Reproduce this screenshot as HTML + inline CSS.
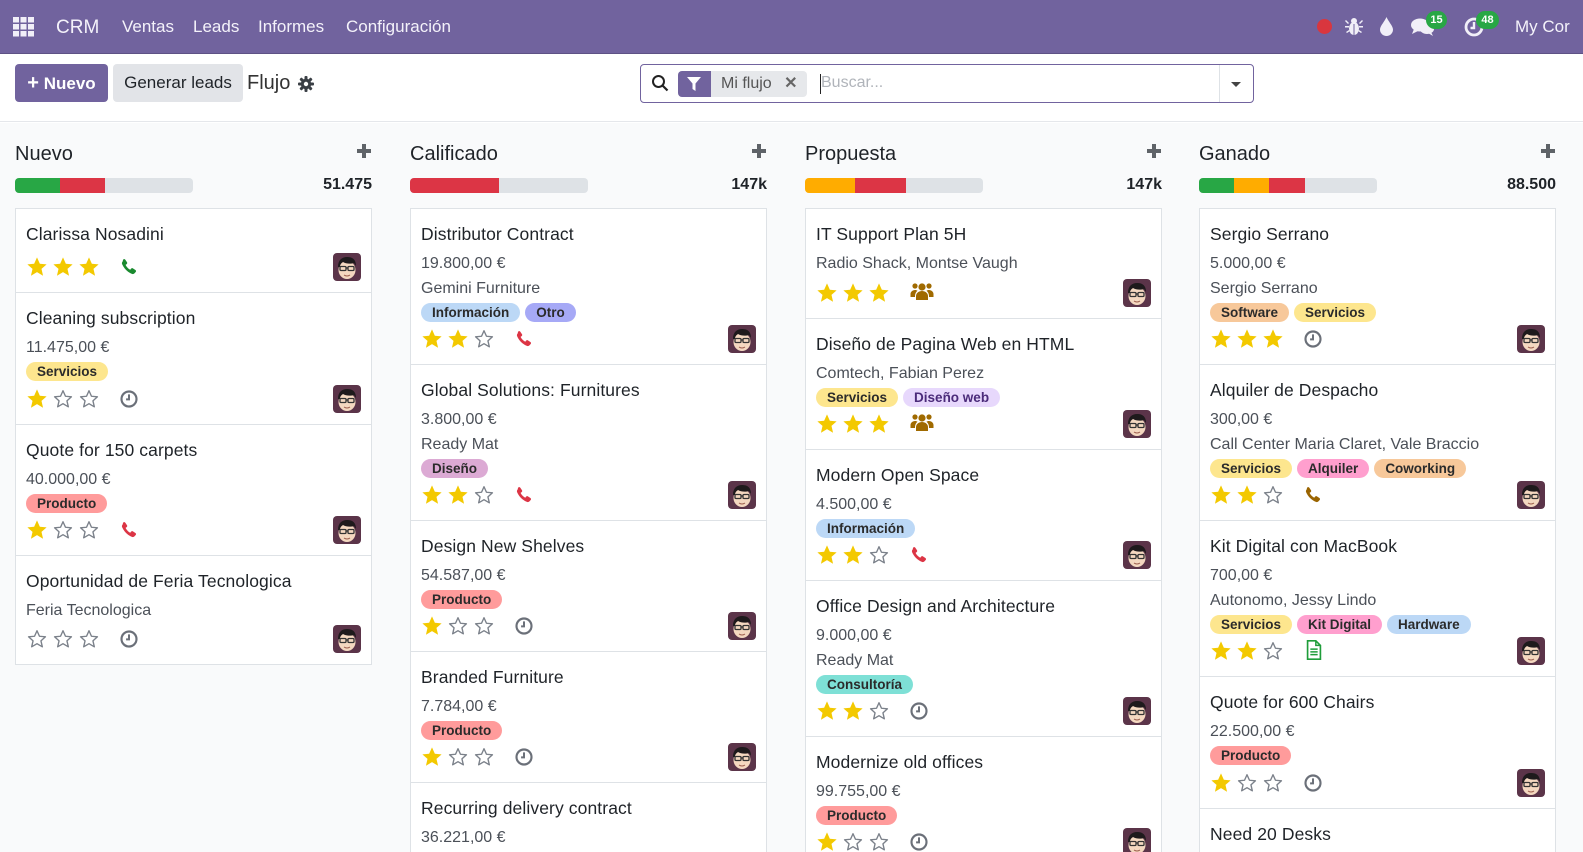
<!DOCTYPE html>
<html style="width:1583px;height:852px;overflow:hidden"><head><meta charset="utf-8">
<style>
*{box-sizing:border-box;margin:0;padding:0}
html,body{width:1583px;height:852px;overflow:hidden}
body{font-family:"Liberation Sans",sans-serif;background:#fff;position:relative;color:#1f2328}
.nav{position:absolute;left:0;top:0;width:1583px;height:54px;background:#71639e;border-bottom:1px solid #5e5285;color:#fff}
.nav span{position:absolute;top:17px;font-size:17px;color:#f4f2fa}
.ctrl{position:absolute;top:54px;left:0;width:1583px;height:68px;background:#fff;border-bottom:1px solid #e5e7eb}
.btnp{position:absolute;left:15px;top:64px;width:93px;height:38px;background:#71639e;border-radius:4px;color:#fff;font-size:17px;line-height:38px;text-align:center}
.btns{position:absolute;left:113px;top:64px;width:130px;height:38px;background:#e2e4e8;border-radius:4px;color:#1f2328;font-size:17px;line-height:38px;text-align:center}
.board{position:absolute;top:123px;left:0;width:1583px;height:729px;background:#f9fafb}
.col{position:absolute;top:123px;width:357px}
.ch{position:absolute;top:20px;left:0;font-size:20px;color:#1f2328}
.plus{position:absolute;right:0;top:20px;width:16px;height:16px}
.bar{position:absolute;top:55px;left:0;width:178px;height:15px;background:#dee2e6;border-radius:4px;overflow:hidden;display:flex}
.bar i{display:block;height:15px}
.tot{position:absolute;right:0;top:53px;font-size:16px;font-weight:bold;color:#1f2328}
.card{position:absolute;left:0;width:357px;background:#fff;border:1px solid #dee2e6;padding:12px 10px 0 10px}
.t{font-size:17.5px;line-height:26px;height:26px;color:#1f2328;white-space:nowrap;letter-spacing:.1px}
.s{font-size:16px;line-height:25px;height:25px;color:#4b5058;white-space:nowrap}
.s.f{margin-top:3.5px}
.tags{margin-top:2px;height:19px;display:flex;gap:5px}
.tag{height:19px;line-height:19px;border-radius:10px;padding:0 11px;font-size:13.5px;font-weight:bold;color:#2b2b2b}
.y{background:#fde68e}.r{background:#ff9b9b}.b{background:#bcd8f6}.v{background:#a6a9f6}.p{background:#dcaad4}.o{background:#f7c89a}.k{background:#ff9fce}.l{background:#e7d8fc;color:#4b2b7a}.g{background:#7ee0d6}
.ft{position:absolute;left:10px;right:10px;bottom:10px;height:30px}
.ft svg.st{position:absolute;top:4px;width:22px;height:22px}
.ic{position:absolute;left:93px;top:5px;width:20px;height:20px}
.av{position:absolute;right:0;top:1px;width:28px;height:28px}
</style></head><body>
<svg width="0" height="0" style="position:absolute">
<defs>
<symbol id="sf" viewBox="0 0 24 24"><path d="M12 1.5l3.1 6.9 7.4.7-5.6 5 1.7 7.4L12 17.6l-6.6 3.9 1.7-7.4-5.6-5 7.4-.7z" fill="#f3c900"/></symbol>
<symbol id="se" viewBox="0 0 24 24"><path d="M12 3l2.7 6 6.5.6-4.9 4.4 1.5 6.5L12 17.1l-5.8 3.4 1.5-6.5-4.9-4.4 6.5-.6z" fill="none" stroke="#7b818a" stroke-width="1.5" stroke-linejoin="round"/></symbol>
<symbol id="ph" viewBox="0 0 24 24"><path d="M5 3c1-.8 2-.6 2.6.3l2 3c.5.8.3 1.6-.4 2.2l-1.3 1c1.2 2.5 3.1 4.5 5.6 5.8l1-1.3c.6-.7 1.5-.9 2.2-.4l3 2c.9.6 1 1.7.2 2.6l-1.4 1.5c-.8.8-2 1-3 .6C9.8 17.7 6.3 14.2 3.7 8.5c-.4-1-.2-2.2.6-3z" fill="currentColor"/></symbol>
<symbol id="ck" viewBox="0 0 24 24"><circle cx="12" cy="12" r="9" fill="none" stroke="#6b7079" stroke-width="2.6"/><path d="M12 6.5V12.5H8.5" fill="none" stroke="#6b7079" stroke-width="2.4"/></symbol>
<symbol id="pp" viewBox="0 0 24 24"><g fill="#a06a00"><circle cx="12" cy="7" r="3.6"/><circle cx="5" cy="6" r="2.6"/><circle cx="19" cy="6" r="2.6"/><path d="M6 20v-4c0-3 3-5 6-5s6 2 6 5v4z"/><path d="M0.5 17v-3c0-2 2-4 4.5-4 1 0 2 .3 2.5.8C6 12 5 14 5 16v1z"/><path d="M23.5 17v-3c0-2-2-4-4.5-4-1 0-2 .3-2.5.8C18 12 19 14 19 16v1z"/></g></symbol>
<symbol id="dc" viewBox="0 0 24 24"><path d="M5 2h9l5 5v15H5z" fill="none" stroke="#1f9d3a" stroke-width="1.8"/><path d="M14 2v5h5M8 11h8M8 14h8M8 17h8" fill="none" stroke="#1f9d3a" stroke-width="1.6"/></symbol>
<symbol id="avt" viewBox="0 0 28 28"><rect width="28" height="28" rx="4" fill="#5b3449"/><ellipse cx="14" cy="17" rx="8.5" ry="9" fill="#f4d8c0"/><path d="M5 14c0-7 4-10 9-10s9 2 9 9l-2-3c-3 1-8 1-11-1-2 1-3 3-3 5z" fill="#1e1a1c"/><g fill="none" stroke="#333" stroke-width="1.3"><rect x="7" y="13.5" width="6" height="4" rx="1"/><rect x="15" y="13.5" width="6" height="4" rx="1"/><path d="M13 15h2"/></g><path d="M11 22q3 2 6 0" stroke="#9a5b4a" stroke-width="1" fill="none"/></symbol>
<symbol id="pl" viewBox="0 0 16 16"><path d="M6 1h4v5h5v4h-5v5H6v-5H1V6h5z" fill="#5f6368"/></symbol>
</defs></svg>

<div class="nav">
<svg style="position:absolute;left:13px;top:17px" width="21" height="20" viewBox="0 0 21 20"><g fill="#f1eff8"><rect x="0" y="0" width="6" height="5.5"/><rect x="7.5" y="0" width="6" height="5.5"/><rect x="15" y="0" width="6" height="5.5"/><rect x="0" y="7" width="6" height="5.5"/><rect x="7.5" y="7" width="6" height="5.5"/><rect x="15" y="7" width="6" height="5.5"/><rect x="0" y="14" width="6" height="5.5"/><rect x="7.5" y="14" width="6" height="5.5"/><rect x="15" y="14" width="6" height="5.5"/></g></svg>
<span style="left:56px;font-size:19px;top:17px">CRM</span>
<span style="left:122px">Ventas</span>
<span style="left:193px">Leads</span>
<span style="left:258px">Informes</span>
<span style="left:346px">Configuración</span>
<div style="position:absolute;left:1317px;top:19px;width:15px;height:15px;border-radius:50%;background:#d9363e"></div>
<svg style="position:absolute;left:1345px;top:17px" width="18" height="19" viewBox="0 0 18 19"><g fill="#f1eff8"><ellipse cx="9" cy="11.5" rx="5" ry="6.5"/><circle cx="9" cy="4" r="3"/><path d="M0 9h4v1.5H0zM14 9h4v1.5h-4zM1 15l3-2 1 1-3 2zM17 15l-3-2-1 1 3 2zM1 3l3 3-1 1-3-3zM17 3l-3 3 1 1 3-3z"/></g><path d="M9 7v11" stroke="#71639e" stroke-width="1"/></svg>
<svg style="position:absolute;left:1380px;top:17px" width="13" height="19" viewBox="0 0 13 19"><path d="M6.5 0C5 4 0 9 0 12.5a6.5 6.5 0 0 0 13 0C13 9 8 4 6.5 0z" fill="#f1eff8"/></svg>
<svg style="position:absolute;left:1411px;top:17px" width="24" height="20" viewBox="0 0 24 20"><g fill="#f1eff8"><ellipse cx="9" cy="8" rx="9" ry="6.5"/><path d="M3 12l-2 5 6-3z"/><ellipse cx="16" cy="12" rx="7" ry="5"/><path d="M20 15l2 4-5-3z"/></g></svg>
<div style="position:absolute;left:1426px;top:11px;width:21px;height:18px;border-radius:9px;background:#28a745;color:#fff;font-size:11px;font-weight:bold;text-align:center;line-height:18px">15</div>
<svg style="position:absolute;left:1464px;top:17px" width="20" height="20" viewBox="0 0 20 20"><circle cx="10" cy="10" r="8" fill="none" stroke="#f1eff8" stroke-width="2.8"/><path d="M10 5v6H6.5" stroke="#f1eff8" stroke-width="2.4" fill="none"/></svg>
<div style="position:absolute;left:1476px;top:11px;width:23px;height:18px;border-radius:9px;background:#28a745;color:#fff;font-size:11px;font-weight:bold;text-align:center;line-height:18px">48</div>
<span style="left:1515px">My Cor</span>
</div>

<div class="ctrl"></div>
<div class="btnp"><b style="font-size:20px">+</b> <b>Nuevo</b></div>
<div class="btns">Generar leads</div>
<div style="position:absolute;left:247px;top:72px;font-size:20px;color:#333">Flujo</div>
<svg style="position:absolute;left:298px;top:76px" width="16" height="16" viewBox="0 0 16 16"><g fill="#3a3f45"><circle cx="8" cy="8" r="5.2"/><rect x="6.5" y="0" width="3" height="16" rx="1"/><rect x="0" y="6.5" width="16" height="3" rx="1"/><rect x="6.5" y="0" width="3" height="16" rx="1" transform="rotate(45 8 8)"/><rect x="6.5" y="0" width="3" height="16" rx="1" transform="rotate(-45 8 8)"/></g><circle cx="8" cy="8" r="2.2" fill="#fff"/></svg>

<div style="position:absolute;left:640px;top:64px;width:614px;height:39px;border:1px solid #71639e;border-radius:4px;background:#fff"></div>
<svg style="position:absolute;left:651px;top:74px" width="18" height="18" viewBox="0 0 18 18"><circle cx="7.5" cy="7.5" r="5.5" fill="none" stroke="#222" stroke-width="2"/><path d="M11.5 11.5l5 5" stroke="#222" stroke-width="2.2"/></svg>
<div style="position:absolute;left:678px;top:71px;width:33px;height:26px;background:#71639e;border-radius:4px 0 0 4px"></div>
<svg style="position:absolute;left:686px;top:76px" width="16" height="16" viewBox="0 0 16 16"><path d="M1 1h14l-5.5 6.5V15l-3-2V7.5z" fill="#fff"/></svg>
<div style="position:absolute;left:711px;top:71px;width:96px;height:26px;background:#e6e8eb;border-radius:0 4px 4px 0;font-size:16px;color:#555;line-height:26px;padding-left:10px">Mi flujo <b style="margin-left:8px;color:#666">✕</b></div>
<div style="position:absolute;left:820px;top:74px;width:1px;height:20px;background:#222"></div>
<div style="position:absolute;left:821px;top:74px;font-size:16px;color:#b0b4ba">Buscar...</div>
<div style="position:absolute;left:1219px;top:65px;width:1px;height:37px;background:#dee2e6"></div>
<div style="position:absolute;left:1231px;top:82px;width:0;height:0;border-left:5px solid transparent;border-right:5px solid transparent;border-top:5px solid #444"></div>

<div class="board"></div>

<div class="col" style="left:15px">
<div class="ch">Nuevo</div><svg class="plus"><use href="#pl"/></svg>
<div class="bar"><i style="width:45px;background:#28a745"></i><i style="width:45px;background:#dc3545"></i></div>
<div class="tot">51.475</div>
</div>
<div class="col" style="left:410px">
<div class="ch">Calificado</div><svg class="plus"><use href="#pl"/></svg>
<div class="bar"><i style="width:89px;background:#dc3545"></i></div>
<div class="tot">147k</div>
</div>
<div class="col" style="left:805px">
<div class="ch">Propuesta</div><svg class="plus"><use href="#pl"/></svg>
<div class="bar"><i style="width:50px;background:#ffac00"></i><i style="width:51px;background:#dc3545"></i></div>
<div class="tot">147k</div>
</div>
<div class="col" style="left:1199px">
<div class="ch">Ganado</div><svg class="plus"><use href="#pl"/></svg>
<div class="bar"><i style="width:35px;background:#28a745"></i><i style="width:35px;background:#ffac00"></i><i style="width:36px;background:#dc3545"></i></div>
<div class="tot">88.500</div>
</div>

<div class="card" style="left:15px;top:208px;height:85px"><div class="t">Clarissa Nosadini</div>
<div class="ft"><svg class="st" style="left:0"><use href="#sf"/></svg><svg class="st" style="left:26px"><use href="#sf"/></svg><svg class="st" style="left:52px"><use href="#sf"/></svg><svg class="ic" style="color:#1a8a2f"><use href="#ph"/></svg><svg class="av"><use href="#avt"/></svg></div></div>
<div class="card" style="left:15px;top:292px;height:133px"><div class="t">Cleaning subscription</div><div class="s f">11.475,00 €</div><div class="tags"><span class="tag y">Servicios</span></div>
<div class="ft"><svg class="st" style="left:0"><use href="#sf"/></svg><svg class="st" style="left:26px"><use href="#se"/></svg><svg class="st" style="left:52px"><use href="#se"/></svg><svg class="ic"><use href="#ck"/></svg><svg class="av"><use href="#avt"/></svg></div></div>
<div class="card" style="left:15px;top:424px;height:132px"><div class="t">Quote for 150 carpets</div><div class="s f">40.000,00 €</div><div class="tags"><span class="tag r">Producto</span></div>
<div class="ft"><svg class="st" style="left:0"><use href="#sf"/></svg><svg class="st" style="left:26px"><use href="#se"/></svg><svg class="st" style="left:52px"><use href="#se"/></svg><svg class="ic" style="color:#dc3545"><use href="#ph"/></svg><svg class="av"><use href="#avt"/></svg></div></div>
<div class="card" style="left:15px;top:555px;height:110px"><div class="t">Oportunidad de Feria Tecnologica</div><div class="s f">Feria Tecnologica</div>
<div class="ft"><svg class="st" style="left:0"><use href="#se"/></svg><svg class="st" style="left:26px"><use href="#se"/></svg><svg class="st" style="left:52px"><use href="#se"/></svg><svg class="ic"><use href="#ck"/></svg><svg class="av"><use href="#avt"/></svg></div></div>

<div class="card" style="left:410px;top:208px;height:157px"><div class="t">Distributor Contract</div><div class="s f">19.800,00 €</div><div class="s">Gemini Furniture</div><div class="tags"><span class="tag b">Información</span><span class="tag v">Otro</span></div>
<div class="ft"><svg class="st" style="left:0"><use href="#sf"/></svg><svg class="st" style="left:26px"><use href="#sf"/></svg><svg class="st" style="left:52px"><use href="#se"/></svg><svg class="ic" style="color:#dc3545"><use href="#ph"/></svg><svg class="av"><use href="#avt"/></svg></div></div>
<div class="card" style="left:410px;top:364px;height:157px"><div class="t">Global Solutions: Furnitures</div><div class="s f">3.800,00 €</div><div class="s">Ready Mat</div><div class="tags"><span class="tag p">Diseño</span></div>
<div class="ft"><svg class="st" style="left:0"><use href="#sf"/></svg><svg class="st" style="left:26px"><use href="#sf"/></svg><svg class="st" style="left:52px"><use href="#se"/></svg><svg class="ic" style="color:#dc3545"><use href="#ph"/></svg><svg class="av"><use href="#avt"/></svg></div></div>
<div class="card" style="left:410px;top:520px;height:132px"><div class="t">Design New Shelves</div><div class="s f">54.587,00 €</div><div class="tags"><span class="tag r">Producto</span></div>
<div class="ft"><svg class="st" style="left:0"><use href="#sf"/></svg><svg class="st" style="left:26px"><use href="#se"/></svg><svg class="st" style="left:52px"><use href="#se"/></svg><svg class="ic"><use href="#ck"/></svg><svg class="av"><use href="#avt"/></svg></div></div>
<div class="card" style="left:410px;top:651px;height:132px"><div class="t">Branded Furniture</div><div class="s f">7.784,00 €</div><div class="tags"><span class="tag r">Producto</span></div>
<div class="ft"><svg class="st" style="left:0"><use href="#sf"/></svg><svg class="st" style="left:26px"><use href="#se"/></svg><svg class="st" style="left:52px"><use href="#se"/></svg><svg class="ic"><use href="#ck"/></svg><svg class="av"><use href="#avt"/></svg></div></div>
<div class="card" style="left:410px;top:782px;height:80px"><div class="t">Recurring delivery contract</div><div class="s f">36.221,00 €</div></div>

<div class="card" style="left:805px;top:208px;height:111px"><div class="t">IT Support Plan 5H</div><div class="s f">Radio Shack, Montse Vaugh</div>
<div class="ft"><svg class="st" style="left:0"><use href="#sf"/></svg><svg class="st" style="left:26px"><use href="#sf"/></svg><svg class="st" style="left:52px"><use href="#sf"/></svg><svg class="ic" style="width:24px;height:24px;top:2px;left:94px"><use href="#pp"/></svg><svg class="av"><use href="#avt"/></svg></div></div>
<div class="card" style="left:805px;top:318px;height:132px"><div class="t">Diseño de Pagina Web en HTML</div><div class="s f">Comtech, Fabian Perez</div><div class="tags"><span class="tag y">Servicios</span><span class="tag l">Diseño web</span></div>
<div class="ft"><svg class="st" style="left:0"><use href="#sf"/></svg><svg class="st" style="left:26px"><use href="#sf"/></svg><svg class="st" style="left:52px"><use href="#sf"/></svg><svg class="ic" style="width:24px;height:24px;top:2px;left:94px"><use href="#pp"/></svg><svg class="av"><use href="#avt"/></svg></div></div>
<div class="card" style="left:805px;top:449px;height:132px"><div class="t">Modern Open Space</div><div class="s f">4.500,00 €</div><div class="tags"><span class="tag b">Información</span></div>
<div class="ft"><svg class="st" style="left:0"><use href="#sf"/></svg><svg class="st" style="left:26px"><use href="#sf"/></svg><svg class="st" style="left:52px"><use href="#se"/></svg><svg class="ic" style="color:#dc3545"><use href="#ph"/></svg><svg class="av"><use href="#avt"/></svg></div></div>
<div class="card" style="left:805px;top:580px;height:157px"><div class="t">Office Design and Architecture</div><div class="s f">9.000,00 €</div><div class="s">Ready Mat</div><div class="tags"><span class="tag g">Consultoría</span></div>
<div class="ft"><svg class="st" style="left:0"><use href="#sf"/></svg><svg class="st" style="left:26px"><use href="#sf"/></svg><svg class="st" style="left:52px"><use href="#se"/></svg><svg class="ic"><use href="#ck"/></svg><svg class="av"><use href="#avt"/></svg></div></div>
<div class="card" style="left:805px;top:736px;height:132px"><div class="t">Modernize old offices</div><div class="s f">99.755,00 €</div><div class="tags"><span class="tag r">Producto</span></div>
<div class="ft"><svg class="st" style="left:0"><use href="#sf"/></svg><svg class="st" style="left:26px"><use href="#se"/></svg><svg class="st" style="left:52px"><use href="#se"/></svg><svg class="ic"><use href="#ck"/></svg><svg class="av"><use href="#avt"/></svg></div></div>

<div class="card" style="left:1199px;top:208px;height:157px"><div class="t">Sergio Serrano</div><div class="s f">5.000,00 €</div><div class="s">Sergio Serrano</div><div class="tags"><span class="tag o">Software</span><span class="tag y">Servicios</span></div>
<div class="ft"><svg class="st" style="left:0"><use href="#sf"/></svg><svg class="st" style="left:26px"><use href="#sf"/></svg><svg class="st" style="left:52px"><use href="#sf"/></svg><svg class="ic"><use href="#ck"/></svg><svg class="av"><use href="#avt"/></svg></div></div>
<div class="card" style="left:1199px;top:364px;height:157px"><div class="t">Alquiler de Despacho</div><div class="s f">300,00 €</div><div class="s">Call Center Maria Claret, Vale Braccio</div><div class="tags"><span class="tag y">Servicios</span><span class="tag k">Alquiler</span><span class="tag o">Coworking</span></div>
<div class="ft"><svg class="st" style="left:0"><use href="#sf"/></svg><svg class="st" style="left:26px"><use href="#sf"/></svg><svg class="st" style="left:52px"><use href="#se"/></svg><svg class="ic" style="color:#9a6400"><use href="#ph"/></svg><svg class="av"><use href="#avt"/></svg></div></div>
<div class="card" style="left:1199px;top:520px;height:157px"><div class="t">Kit Digital con MacBook</div><div class="s f">700,00 €</div><div class="s">Autonomo, Jessy Lindo</div><div class="tags"><span class="tag y">Servicios</span><span class="tag k">Kit Digital</span><span class="tag b">Hardware</span></div>
<div class="ft"><svg class="st" style="left:0"><use href="#sf"/></svg><svg class="st" style="left:26px"><use href="#sf"/></svg><svg class="st" style="left:52px"><use href="#se"/></svg><svg class="ic" style="width:22px;height:24px;top:2px"><use href="#dc"/></svg><svg class="av"><use href="#avt"/></svg></div></div>
<div class="card" style="left:1199px;top:676px;height:133px"><div class="t">Quote for 600 Chairs</div><div class="s f">22.500,00 €</div><div class="tags"><span class="tag r">Producto</span></div>
<div class="ft"><svg class="st" style="left:0"><use href="#sf"/></svg><svg class="st" style="left:26px"><use href="#se"/></svg><svg class="st" style="left:52px"><use href="#se"/></svg><svg class="ic"><use href="#ck"/></svg><svg class="av"><use href="#avt"/></svg></div></div>
<div class="card" style="left:1199px;top:808px;height:50px"><div class="t">Need 20 Desks</div></div>
</body></html>
